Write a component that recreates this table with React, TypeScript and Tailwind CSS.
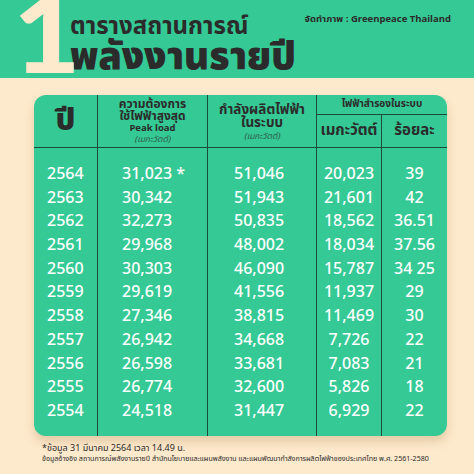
const rows: Array<[string, string, string, string, string]> = [
  ["2564", "31,023 *", "51,046", "20,023", "39"],
  ["2563", "30,342", "51,943", "21,601", "42"],
  ["2562", "32,273", "50,835", "18,562", "36.51"],
  ["2561", "29,968", "48,002", "18,034", "37.56"],
  ["2560", "30,303", "46,090", "15,787", "34 25"],
  ["2559", "29,619", "41,556", "11,937", "29"],
  ["2558", "27,346", "38,815", "11,469", "30"],
  ["2557", "26,942", "34,668", "7,726", "22"],
  ["2556", "26,598", "33,681", "7,083", "21"],
  ["2555", "26,774", "32,600", "5,826", "18"],
  ["2554", "24,518", "31,447", "6,929", "22"],
];

const font = { fontFamily: '"Noto Sans Thai", "Noto Sans", "Liberation Sans", sans-serif' };

export default function App() {
  return (
    <div className="h-[474px] w-[474px] overflow-hidden bg-[#fde9cc] text-[#2b2b2b]" style={font}>
      <header className="flex h-[78px] bg-[#35c995]">
        <div className="relative w-[64px] shrink-0">
          <span className="absolute left-[13px] top-[-21px] origin-left scale-x-[1.1] font-['Lato'] text-[106px] font-black leading-none text-[#fde9cc]">1</span>
        </div>
        <div className="flex flex-col pl-[6px] pt-[14px]">
          <h2 className="text-[24px] font-bold leading-[26px]">ตารางสถานการณ์</h2>
          <h1 className="text-[38px] font-black leading-[36px]">พลังงานรายปี</h1>
        </div>
        <p className="ml-auto pr-[23px] pt-[12px] text-[9.5px] font-bold">จัดทำภาพ : Greenpeace Thailand</p>
      </header>

      <div className="ml-[34px] mt-[17px] h-[341px] w-[413px] overflow-hidden rounded-[12px] bg-[#35c995] shadow-[0_6px_10px_rgba(160,120,60,0.25)]">
        <div className="grid h-full grid-cols-[64px_110px_109px_65px_65px] grid-rows-[53px_1fr]">
          {/* header */}
          <div className="flex items-center justify-center border-b border-r border-[#1e4a3a] text-[30px] font-black">ปี</div>
          <div className="flex flex-col items-center justify-center border-b border-r border-[#1e4a3a] pt-[2px] text-center leading-[12px]">
            <span className="text-[12px] font-bold">ความต้องการ</span>
            <span className="text-[12px] font-bold">ใช้ไฟฟ้าสูงสุด</span>
            <span className="text-[9.5px] font-bold">Peak load</span>
            <span className="text-[8.5px] italic text-[#2f5a4b]">(เมกะวัตต์)</span>
          </div>
          <div className="flex flex-col items-center justify-center border-b border-r border-[#1e4a3a] pt-[4px] text-center leading-[13px]">
            <span className="text-[13.5px] font-bold">กำลังผลิตไฟฟ้า</span>
            <span className="text-[13.5px] font-bold">ในระบบ</span>
            <span className="text-[8.5px] italic text-[#2f5a4b]">(เมกะวัตต์)</span>
          </div>
          <div className="col-span-2 flex flex-col border-b border-[#1e4a3a]">
            <div className="flex h-[20px] items-center justify-center border-b border-[#1e4a3a] text-[10px] font-bold">ไฟฟ้าสำรองในระบบ</div>
            <div className="grid flex-1 grid-cols-2">
              <div className="flex items-center justify-center border-r border-[#1e4a3a] text-[15px] font-bold">เมกะวัตต์</div>
              <div className="flex items-center justify-center text-[15px] font-bold">ร้อยละ</div>
            </div>
          </div>

          {/* body */}
          <div className="flex flex-col border-r border-[#1e4a3a] pl-[13px] pt-[15px]">
            {rows.map((r) => (
              <span key={r[0]} className="h-[23.7px] text-[16px] font-medium leading-[23.7px] text-white">{r[0]}</span>
            ))}
          </div>
          <div className="flex flex-col border-r border-[#1e4a3a] pl-[24px] pt-[15px]">
            {rows.map((r) => (
              <span key={r[0]} className="h-[23.7px] text-[16px] font-medium leading-[23.7px] text-white">{r[1]}</span>
            ))}
          </div>
          <div className="flex flex-col border-r border-[#1e4a3a] pl-[26px] pt-[15px]">
            {rows.map((r) => (
              <span key={r[0]} className="h-[23.7px] text-[16px] font-medium leading-[23.7px] text-white">{r[2]}</span>
            ))}
          </div>
          <div className="flex flex-col items-center border-r border-[#1e4a3a] pt-[15px]">
            {rows.map((r) => (
              <span key={r[0]} className="h-[23.7px] text-[16px] font-medium leading-[23.7px] text-white">{r[3]}</span>
            ))}
          </div>
          <div className="flex flex-col items-center pt-[15px]">
            {rows.map((r) => (
              <span key={r[0]} className="h-[23.7px] text-[16px] font-medium leading-[23.7px] text-white">{r[4]}</span>
            ))}
          </div>
        </div>
      </div>

      <div className="pl-[42px] pt-[6px]">
        <p className="text-[9px] leading-[12px]">*ข้อมูล 31 มีนาคม 2564 เวลา 14.49 น.</p>
        <p className="whitespace-nowrap text-[7.1px] leading-[10px]">
          ข้อมูลอ้างอิง สถานการณ์พลังงานรายปี สำนักนโยบายและแผนพลังงาน และแผนพัฒนากำลังการผลิตไฟฟ้าของประเทศไทย พ.ศ. 2561-2580
        </p>
      </div>
    </div>
  );
}
